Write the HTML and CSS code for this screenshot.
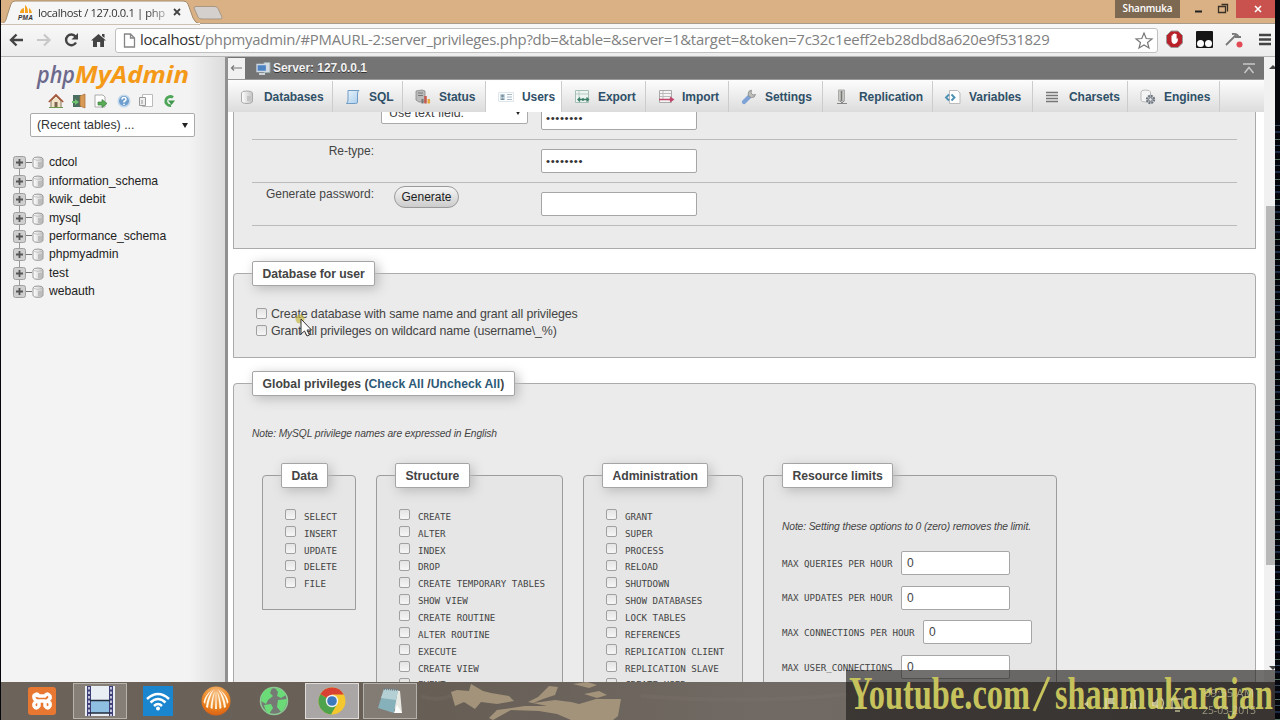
FILE: index.html
```html
<!DOCTYPE html>
<html lang="en">
<head>
    <meta charset="UTF-8">
    <title>localhost / 127.0.0.1 | phpMyAdmin</title>
    <link rel="stylesheet" href="styles.css">
</head>
<body>

<!-- shared icons -->
<svg class="defs" width="0" height="0">
    <defs>
        <linearGradient id="gBlue" x1="0" y1="0" x2="1" y2="1"><stop offset="0" stop-color="#eaf5fd"/><stop offset="1" stop-color="#a9cdea"/></linearGradient>
        <linearGradient id="gGrey" x1="0" y1="0" x2="1" y2="0"><stop offset="0" stop-color="#fff"/><stop offset="1" stop-color="#c4c4c4"/></linearGradient>
        <radialGradient id="gBall" cx=".5" cy=".25" r=".8"><stop offset="0" stop-color="#f7c187"/><stop offset=".6" stop-color="#ea8420"/><stop offset="1" stop-color="#d85a12"/></radialGradient>
    </defs>
    <symbol id="db" viewBox="0 0 12 13">
        <path d="M1 3Q1 1 6 1T11 3V10Q11 12.3 6 12.3T1 10Z" fill="url(#gGrey)" stroke="#999"/>
        <path d="M1.5 3.3Q6 5.6 10.5 3.3" fill="none" stroke="#bbb" stroke-width=".8"/>
        <path d="M6 6h4v5H6z" fill="#bdbdbd"/>
    </symbol>
    <symbol id="plus" viewBox="0 0 13 13">
        <rect x=".5" y=".5" width="12" height="12" rx="2" fill="#cfcfcf" stroke="#a0a0a0"/>
        <path d="M6.5 3v7M3 6.5h7" stroke="#555" stroke-width="1.8"/>
    </symbol>
</svg>

<div class="screen">
    <div class="titlebar">
        <svg class="tab-shape" width="224" height="24" viewBox="0 0 224 24">
            <path d="M0 24C5 23 5 19 7 13L10 4Q11 1 14 1H182Q186 1 187 4L192 18Q194 23 199 24Z" fill="#f6f6f6" stroke="#a48a6a"/>
            <path d="M0 23.5H199" stroke="#f6f6f6"/>
            <path d="M194 6.500H214Q216 6.500 217 8.500L221 17Q221.500 19 219 19H201Q198 19 197 17L193 8Q193 6.500 195 6.500Z" fill="#d3d0cd" stroke="#a99782"/>
        </svg>
        <div class="tab-content">
            <svg width="16" height="16" viewBox="0 0 16 16">
                <path d="M2 9Q2 5 6 4V9ZM7 9V1Q10 3 10 9ZM11 9V4Q14 6 14 9Z" fill="#f4a11c"/>
                <text x="0" y="16" class="pma" textLength="15">PMA</text>
            </svg>
            <span class="tab-title">localhost / 127.0.0.1 | php</span>
            <svg class="tab-close" width="8" height="8" viewBox="0 0 8 8"><path d="M1 1l6 6M7 1L1 7" stroke="#444" stroke-width="1.8"/></svg>
        </div>
        <div class="window-buttons">
            <span class="user">Shanmuka</span>
            <svg width="56" height="18" viewBox="0 0 56 18"><path d="M15 11.500h7" stroke="#222" stroke-width="2"/><path d="M41.500 4.500h6v7M38.500 6.500h7v6h-7z" fill="none" stroke="#3a3026" stroke-width="1.300"/></svg>
            <span class="close"><svg width="8" height="8" viewBox="0 0 8 8"><path d="M1 1l6 6M7 1L1 7" stroke="#fff" stroke-width="1.600"/></svg></span>
        </div>
    </div>

    <div class="toolbar">
        <svg class="nav" width="104" height="20" viewBox="0 0 104 20">
            <path d="M17 10H5M10.500 4.500L5 10L10.500 15.500" fill="none" stroke="#444" stroke-width="2.400"/>
            <path d="M31 10H43M38 4.500L43.500 10L38 15.500" fill="none" stroke="#c8c8c8" stroke-width="2.200"/>
            <path d="M69.500 6.500A5.300 5.300 0 1 0 70 12.500" fill="none" stroke="#444" stroke-width="2.400"/><path d="M72 3v6.500H65.500z" fill="#444"/>
            <path d="M85 10.500L92.500 4L100 10.500H98V17H94.200V12H91V17H87V10.500ZM96 4h2.500v4L96 6z" fill="#444"/>
        </svg>
        <div class="address">
            <svg width="13" height="15" viewBox="0 0 13 15"><path d="M1.500 1H7.500L11.500 5V14H1.500ZM7.500 1V5H11.500" fill="#fff" stroke="#858585" stroke-width="1.300"/></svg>
            <span class="url"><b>localhost</b>/phpmyadmin/#PMAURL-2:server_privileges.php?db=&amp;table=&amp;server=1&amp;target=&amp;token=7c32c1eeff2eb28dbd8a620e9f531829</span>
            <svg class="star" width="18" height="17" viewBox="0 0 18 17"><path d="M9 1L11.200 6.500L17 6.900L12.500 10.500L14 16L9 13L4 16L5.500 10.500L1 6.900L6.800 6.500Z" fill="#fff" stroke="#777" stroke-width="1.200"/></svg>
        </div>
        <svg class="extensions" width="110" height="22" viewBox="0 0 110 22">
            <path d="M7 2h7L18.500 6.500V14L14 18.500H7L2.500 14V6.500Z" fill="#b8202a" stroke="#999"/>
            <path d="M7.500 10V6.500h1.200V5h1.300V4.500h1.300V5h1.300v5l1.200-1v3Q12.500 15 10.500 15Q8 15 7.500 12Z" fill="#fff"/>
            <rect x="32" y="2" width="17" height="17" rx="1" fill="#151515"/><circle cx="36.500" cy="14.500" r="3.500" fill="#fff"/><circle cx="44.500" cy="14.500" r="3.500" fill="#fff"/>
            <path d="M62 16L72 6M68 5Q74 4 75 9M71 8L77 8" fill="none" stroke="#777" stroke-width="1.800"/><circle cx="75.500" cy="15.500" r="3" fill="#e24a55"/>
            <path d="M95 6h12M95 10.500h12M95 15h12" stroke="#444" stroke-width="2.600"/>
        </svg>
    </div>

    <div class="content">
        <div class="sidebar">
            <svg class="logo" width="156" height="30" viewBox="0 0 156 30">
                <text x="2" y="21" class="logo-php" textLength="38" lengthAdjust="spacingAndGlyphs">php</text>
                <text x="40" y="21" class="logo-my" textLength="114" lengthAdjust="spacingAndGlyphs">MyAdmin</text>
            </svg>
            <div class="links">
                <svg width="16" height="16" viewBox="0 0 16 16"><path d="M3 8v6.500h10V8L8 3Z" fill="#f1e3c8" stroke="#8a7663"/><path d="M.8 9L8 2L15.200 9" fill="none" stroke="#a9583c" stroke-width="1.700"/><path d="M6.500 9h3v5.500h-3z" fill="#7d6550"/><path d="M1 14.500h14" stroke="#6a9a4b"/></svg>
                <svg width="16" height="16" viewBox="0 0 16 16"><path d="M2 2h8v12H2z" fill="#4b6d5f"/><path d="M9 3l5-2v14l-5-2z" fill="#d99a56" stroke="#a76b34" stroke-width=".7"/><path d="M1 8h3V6l4 3l-4 3v-2H1z" fill="#6fc36f"/></svg>
                <svg width="16" height="16" viewBox="0 0 16 16"><path d="M2 2h8l2 2v10H2z" fill="#fff" stroke="#aaa"/><path d="M5 9h4V6.500l5 4l-5 4V12H5z" fill="#58ad55" stroke="#3c8042" stroke-width=".7"/></svg>
                <svg width="16" height="16" viewBox="0 0 16 16"><circle cx="8" cy="8" r="5.800" fill="#6f9fce" stroke="#c4d9ec" stroke-width="1.500"/><path d="M6 6.500Q6 4.500 8 4.500T10 6.500Q10 7.500 8 8.500V9.500M8 10.800v1.300" fill="none" stroke="#fff" stroke-width="1.500"/></svg>
                <svg width="16" height="16" viewBox="0 0 16 16"><path d="M4.500 1.500h10v12h-10z" fill="#fff" stroke="#bbb"/><path d="M1.500 4.500h6v8h-6z" fill="#eee" stroke="#999"/><path d="M4 7v4" stroke="#999"/></svg>
                <svg width="16" height="16" viewBox="0 0 16 16"><path d="M12 4.500A4.500 4.500 0 1 0 10 12.500" fill="none" stroke="#4da557" stroke-width="2.800"/><path d="M7 7.500H14L10.500 12z" fill="#3f984d"/></svg>
            </div>
            <div class="recent"><span>(Recent tables) ...</span><i></i></div>
            <ul class="tree">
                <li><svg width="13" height="13"><use href="#plus"/></svg><i></i><svg width="12" height="13"><use href="#db"/></svg><span>cdcol</span></li>
                <li><svg width="13" height="13"><use href="#plus"/></svg><i></i><svg width="12" height="13"><use href="#db"/></svg><span>information_schema</span></li>
                <li><svg width="13" height="13"><use href="#plus"/></svg><i></i><svg width="12" height="13"><use href="#db"/></svg><span>kwik_debit</span></li>
                <li><svg width="13" height="13"><use href="#plus"/></svg><i></i><svg width="12" height="13"><use href="#db"/></svg><span>mysql</span></li>
                <li><svg width="13" height="13"><use href="#plus"/></svg><i></i><svg width="12" height="13"><use href="#db"/></svg><span>performance_schema</span></li>
                <li><svg width="13" height="13"><use href="#plus"/></svg><i></i><svg width="12" height="13"><use href="#db"/></svg><span>phpmyadmin</span></li>
                <li><svg width="13" height="13"><use href="#plus"/></svg><i></i><svg width="12" height="13"><use href="#db"/></svg><span>test</span></li>
                <li><svg width="13" height="13"><use href="#plus"/></svg><i></i><svg width="12" height="13"><use href="#db"/></svg><span>webauth</span></li>
            </ul>
        </div>

        <div class="main">
            <div class="serverbar">
                <span class="back"><svg width="13" height="8" viewBox="0 0 13 8"><path d="M12 4H1.500M4 1.500L1.500 4L4 6.500" fill="none" stroke="#777" stroke-width="1.200"/></svg></span>
                <svg class="server-icon" width="15" height="15" viewBox="0 0 15 15"><path d="M8 1.500h6v10H8z" fill="#d5dbe2" stroke="#9aa"/><path d="M1 3.500h9.500v7H1z" fill="#4c83c3" stroke="#cfd9e4" stroke-width="1.300"/><path d="M3 13h6" stroke="#cdd3da" stroke-width="2"/></svg>
                <span class="server-name">Server: 127.0.0.1</span>
                <svg class="top" width="12" height="11" viewBox="0 0 12 11"><path d="M0 1h12M1.500 10L6 4.500L10.500 10" fill="none" stroke="#c8c8c8" stroke-width="1.500"/></svg>
            </div>
            <div class="tabs">
                <a><svg width="16" height="16" viewBox="0 0 16 16"><path d="M1.500 4Q1.500 2 7 2T12.500 4V12Q12.500 14.500 7 14.500T1.500 12Z" fill="url(#gGrey)" stroke="#aaa"/><path d="M7 7h4v5H7z" fill="#c4c4c4"/></svg>Databases</a>
                <a><svg width="16" height="16" viewBox="0 0 16 16"><path d="M3 1.500H14Q12.500 2 12.500 5V13Q12.500 14.500 10.500 14.500H1.500Q3 13 3 11Z" fill="url(#gBlue)" stroke="#6f9cc4"/></svg>SQL</a>
                <a><svg width="16" height="16" viewBox="0 0 16 16"><path d="M1 2l6-1l3 1v11H4l-3-2z" fill="#bbb" stroke="#888" stroke-width=".8"/><path d="M3 4h5M3 6.500h5" stroke="#777"/><path d="M7.500 10v4.500" stroke="#777" stroke-width="2"/><path d="M10.500 7v7.500" stroke="#c75a4e" stroke-width="2.500"/><path d="M13.800 10v4.500" stroke="#e6a93f" stroke-width="2.500"/></svg>Status</a>
                <a class="active"><svg width="16" height="16" viewBox="0 0 16 16"><path d="M.5 3.500h15v9H.5z" fill="#fbfdff" stroke="#dfe6ea"/><path d="M2 5h5v6H2z" fill="#c5d7e1"/><circle cx="4.500" cy="7" r="1.400" fill="#7d919f"/><path d="M2.500 11q2-4 4 0" fill="#7d919f"/><path d="M9 5.500h5M9 8h5M9 10.500h5" stroke="#abb9c6"/></svg>Users</a>
                <a><svg width="16" height="16" viewBox="0 0 16 16"><path d="M1.500 1.500h13v12h-13z" fill="#eef4f2" stroke="#a5bfb7"/><path d="M2 5h12M5 2v6" stroke="#b6cbc5"/><path d="M4 10.500h10M12.500 8.500l2 2l-2 2M6 8.500l-2 2l2 2M9 9v3" fill="none" stroke="#3d8068" stroke-width="1.400"/></svg>Export</a>
                <a><svg width="16" height="16" viewBox="0 0 16 16"><path d="M1.500 1.500h12v12h-12z" fill="#f7f3f4" stroke="#aaa"/><path d="M2 4.500h11M2 7.500h11M5 2v8" stroke="#bbb"/><path d="M1 10.500h13M12 8.500l3 2l-3 2" fill="none" stroke="#c0476b" stroke-width="1.600"/></svg>Import</a>
                <a><svg width="16" height="16" viewBox="0 0 16 16"><path d="M9 7L3 13" stroke="#7ea2d6" stroke-width="4.200" stroke-linecap="round"/><path d="M14.500 5.500A3.700 3.700 0 1 1 10.500 1.200L10 4l2 2Z" fill="#bfbfba" stroke="#888" stroke-width=".8"/></svg>Settings</a>
                <a><svg width="16" height="16" viewBox="0 0 16 16"><path d="M3.500 1h6v11h-6z" fill="#c9c9c4" stroke="#aaa"/><path d="M6.500 2v10" stroke="#777" stroke-width="1.500"/><path d="M2 14.500h10M5 12l2 2l2-2" fill="none" stroke="#888"/></svg>Replication</a>
                <a><svg width="16" height="16" viewBox="0 0 16 16"><path d="M4.500 1.500h8l2.500 2.500v10.500H4.500z" fill="#fff" stroke="#bbb"/><path d="M4 5.500L1 8.500L4 11.500M6.500 5.500L9.500 8.500L6.500 11.500" fill="none" stroke="#4c91b3" stroke-width="1.900"/></svg>Variables</a>
                <a><svg width="16" height="16" viewBox="0 0 16 16"><path d="M1 3.500h12M1 6.500h12M1 9.500h12M1 12.500h12" stroke="#777" stroke-width="1.700"/></svg>Charsets</a>
                <a><svg width="16" height="16" viewBox="0 0 16 16"><path d="M1 3Q1 1 5.500 1T10.500 3V11Q10 13 5.500 13T1 11Z" fill="#f5f5f5" stroke="#bbb"/><circle cx="10.500" cy="10.500" r="3.600" fill="#ccc" stroke="#6d7680" stroke-width="2.200" stroke-dasharray="1.900 .9"/><circle cx="10.500" cy="10.500" r="1.800" fill="#eee" stroke="#6d7680"/></svg>Engines</a>
            </div>

            <div class="page">
                <div class="login">
                    <div class="item"><label></label><span class="select">Use text field:<i></i></span><span class="input">••••••••</span></div>
                    <div class="item"><label>Re-type:</label><span></span><span class="input">••••••••</span></div>
                    <div class="item"><label>Generate password:</label><span><button>Generate</button></span><span class="input"></span></div>
                </div>

                <fieldset class="box dbuser">
                    <legend>Database for user</legend>
                    <div class="check"><input type="checkbox"><span>Create database with same name and grant all privileges</span></div>
                    <div class="check"><input type="checkbox"><span>Grant all privileges on wildcard name (username\_%)</span></div>
                </fieldset>

                <fieldset class="box global">
                    <legend>Global privileges (<a>Check All</a> /<a>Uncheck All</a>)</legend>
                    <p class="note">Note: MySQL privilege names are expressed in English</p>
                    <div class="groups">
                        <fieldset class="data">
                            <legend>Data</legend>
                            <div class="priv"><input type="checkbox"><code>SELECT</code></div>
                            <div class="priv"><input type="checkbox"><code>INSERT</code></div>
                            <div class="priv"><input type="checkbox"><code>UPDATE</code></div>
                            <div class="priv"><input type="checkbox"><code>DELETE</code></div>
                            <div class="priv"><input type="checkbox"><code>FILE</code></div>
                        </fieldset>
                        <fieldset class="structure">
                            <legend>Structure</legend>
                            <div class="priv"><input type="checkbox"><code>CREATE</code></div>
                            <div class="priv"><input type="checkbox"><code>ALTER</code></div>
                            <div class="priv"><input type="checkbox"><code>INDEX</code></div>
                            <div class="priv"><input type="checkbox"><code>DROP</code></div>
                            <div class="priv"><input type="checkbox"><code>CREATE TEMPORARY TABLES</code></div>
                            <div class="priv"><input type="checkbox"><code>SHOW VIEW</code></div>
                            <div class="priv"><input type="checkbox"><code>CREATE ROUTINE</code></div>
                            <div class="priv"><input type="checkbox"><code>ALTER ROUTINE</code></div>
                            <div class="priv"><input type="checkbox"><code>EXECUTE</code></div>
                            <div class="priv"><input type="checkbox"><code>CREATE VIEW</code></div>
                            <div class="priv"><input type="checkbox"><code>EVENT</code></div>
                        </fieldset>
                        <fieldset class="admin">
                            <legend>Administration</legend>
                            <div class="priv"><input type="checkbox"><code>GRANT</code></div>
                            <div class="priv"><input type="checkbox"><code>SUPER</code></div>
                            <div class="priv"><input type="checkbox"><code>PROCESS</code></div>
                            <div class="priv"><input type="checkbox"><code>RELOAD</code></div>
                            <div class="priv"><input type="checkbox"><code>SHUTDOWN</code></div>
                            <div class="priv"><input type="checkbox"><code>SHOW DATABASES</code></div>
                            <div class="priv"><input type="checkbox"><code>LOCK TABLES</code></div>
                            <div class="priv"><input type="checkbox"><code>REFERENCES</code></div>
                            <div class="priv"><input type="checkbox"><code>REPLICATION CLIENT</code></div>
                            <div class="priv"><input type="checkbox"><code>REPLICATION SLAVE</code></div>
                            <div class="priv"><input type="checkbox"><code>CREATE USER</code></div>
                        </fieldset>
                        <fieldset class="limits">
                            <legend>Resource limits</legend>
                            <p class="note">Note: Setting these options to 0 (zero) removes the limit.</p>
                            <div class="limit"><code>MAX QUERIES PER HOUR</code><span class="input">0</span></div>
                            <div class="limit"><code>MAX UPDATES PER HOUR</code><span class="input">0</span></div>
                            <div class="limit"><code>MAX CONNECTIONS PER HOUR</code><span class="input">0</span></div>
                            <div class="limit"><code>MAX USER_CONNECTIONS</code><span class="input">0</span></div>
                        </fieldset>
                    </div>
                </fieldset>
            </div>
        </div>

        <div class="scrollbar"><i class="up"></i><div class="thumb"></div><i class="down"></i></div>
    </div>

    <div class="taskbar">
        <svg class="camo" width="760" height="38" viewBox="0 0 760 38">
            <path d="M30 10L36 8L48 9L50 2L62 9L70 11L88 14L93 19L76 22L60 20L54 27L43 20L34 24Z" fill="#a3937a"/>
            <path d="M107 20L117 15L128 4L137 5L134 13L122 17L112 21L134 18L150 20L158 22L175 17L200 17L197 34L192 38L150 38L136 32L118 29L90 28L72 38L68 36L76 28L104 24L126 24Z" fill="#a3937a"/>
            <path d="M152 2L166 0L176 3L168 6ZM163 12L178 9L186 13L176 16Z" fill="#a3937a"/>
            <path d="M0 14Q14 20 30 14M220 14Q350 24 460 8" fill="none" stroke="#827a72" stroke-width="4" opacity=".2"/>
        </svg>
        <div class="task"><svg width="30" height="30" viewBox="0 0 30 30"><rect x="1" y="1" width="28" height="28" rx="3" fill="#e87731"/><path d="M11 10Q6 7 7 12Q8 15 11 15Q6 16 7 20Q9 24 12 20V15H18V20Q21 24 23 20Q24 16 20 15Q24 13 23 10Q20 6 18 10H12Q10 6 7 10" fill="none" stroke="#fff" stroke-width="3.400" stroke-linejoin="round"/></svg></div>
        <div class="task open"><svg width="30" height="30" viewBox="0 0 30 30"><rect width="30" height="30" fill="#e9eef5"/><path d="M2 0h4v30H2zM24 0h4v30h-4z" fill="#3f3f78"/><path d="M4 1v29M26 1v29" stroke="#e3e3f2" stroke-width="1.600" stroke-dasharray="2.500 2"/><path d="M6 15h18v12H6z" fill="#8fc0e2"/><path d="M5 14.500h20M5 27h20" stroke="#222b3b" stroke-width="1.600"/></svg></div>
        <div class="task"><svg width="30" height="30" viewBox="0 0 30 30"><rect width="30" height="30" fill="#1a86d0"/><path d="M4 13Q15 3 26 13M7.500 16.500Q15 9.500 22.500 16.500M11 20Q15 16 19 20" fill="none" stroke="#fff" stroke-width="2.500"/><circle cx="15" cy="22.500" r="2" fill="#fff"/></svg></div>
        <div class="task"><svg width="30" height="30" viewBox="0 0 30 30"><circle cx="15" cy="15" r="14.500" fill="url(#gBall)"/><path d="M13 3Q6 10 5 21L7 22Q8 12 13 3ZM14 5Q10 13 9.500 22L11.500 23Q12 12 14 5ZM15 5L14 23H16ZM16 5Q18 12 18.500 23L20.500 22Q20 13 16 5ZM17 3Q22 12 23 22L25 21Q24 10 17 3ZM11 4Q4 9 2.500 16L4 18Q5 10 11 4ZM19 4Q26 9 27.500 16L26 18Q25 10 19 4Z" fill="#fff6e3"/></svg></div>
        <div class="task"><svg width="30" height="30" viewBox="0 0 30 30"><circle cx="15" cy="15" r="13.500" fill="#767a75" stroke="#8fc896" stroke-width="1.500"/><path d="M3 8Q6 2 13 2L11 7L14 10L9 14L7 18L2 15ZM16 2Q24 3 27 9L22 12L18 10L19 6ZM5 19L12 18L14 22L10 28Q6 25 5 19ZM19 14L28 13Q28 21 22 26L18 21Z" fill="#6bdb78"/><path d="M14 14h5M13 17h5" stroke="#777"/></svg></div>
        <div class="task open current"><svg width="28" height="28" viewBox="0 0 28 28"><circle cx="14" cy="14" r="13.500" fill="#f4c72f"/><path d="M14 14L2.300 7.200A13.500 13.500 0 0 1 25.800 7.500H14Z" fill="#d94133"/><path d="M14 14L2.300 7.200A13.500 13.500 0 0 0 13 27.500L19 17Z" fill="#4fa34d"/><circle cx="14" cy="14" r="6.200" fill="#f2f2f2"/><circle cx="14" cy="14" r="4.800" fill="#3e78bd"/></svg></div>
        <div class="task open"><svg width="30" height="30" viewBox="0 0 30 30"><path d="M9 3L25 5L27 27L22 27Z" fill="#e9e9e4"/><path d="M9 3L23 4L19 27L3 22Z" fill="#86b0ba"/><path d="M9 3L23 4L21 14L6 12Z" fill="#b4d0d5"/><path d="M9 3L23 4" stroke="#6d7c82" stroke-width="2" stroke-dasharray="1 1"/><path d="M19 27l3-8l5 8z" fill="#fff"/></svg></div>
    </div>

    <svg class="cursor" width="20" height="24" viewBox="0 0 20 24">
        <circle cx="6" cy="5" r="4.500" fill="#c3b53a" opacity=".65"/>
        <path d="M7 5V20L10.500 17L13 22L15.500 21L13 16H17.500Z" fill="#fff" stroke="#333"/>
    </svg>

    <svg class="watermark" width="429" height="50" viewBox="0 0 429 50">
        <text x="3" y="39" class="mark" textLength="181" lengthAdjust="spacingAndGlyphs">Youtube.com</text>
        <path d="M188 41L203 7" stroke="#c6c25c" stroke-width="3"/>
        <text x="209" y="39" class="mark" textLength="218" lengthAdjust="spacingAndGlyphs">shanmukarajan</text>
        <g class="tray">
            <path d="M238 34l4-3v6z"/>
            <path d="M259 28h2v11h-2zM262 28h7l-2 3l2 3h-7z"/>
            <path d="M280 38h2v-2h-2zM284 38h2v-5h-2zM288 38h2v-8h-2z"/>
            <path d="M306 32h3l3-4v11l-3-3h-3z"/>
            <path d="M315 28q5 5 0 11M326 29h10v9h-10zM329 41h5" class="line"/>
        </g>
        <text x="358" y="27" class="clock" textLength="50" lengthAdjust="spacingAndGlyphs">09:55 AM</text>
        <text x="356" y="44" class="clock" textLength="54" lengthAdjust="spacingAndGlyphs">25-03-2015</text>
    </svg>
</div>

</body>
</html>
```
FILE: styles.css
```css
* {
    box-sizing: border-box;
}
body {
    margin: 0;
    height: 720px;
    overflow: hidden;
    padding-left: 1px;
    background: #05070c;
    font-family: "Liberation Sans", Arial, sans-serif;
    font-size: 13px;
    color: #444;
}
/* strip of desktop right of the window */
body::after {
    content: "";
    position: absolute;
    top: 120px;
    right: 0;
    bottom: 0;
    width: 5px;
    background: repeating-linear-gradient(#05070c 0 5px, #33485c 5px 6px, #05070c 6px 11px, #1c2a44 11px 13px, #05070c 13px 19px, #51705f 19px 20px);
}
svg {
    display: block;
    flex: none;
    overflow: visible;
}
.defs {
    position: absolute;
}
.screen {
    position: relative;
    display: flex;
    flex-direction: column;
    width: 1274px;
    height: 720px;
    overflow: hidden;
}

/* browser window */
.titlebar {
    position: relative;
    display: flex;
    justify-content: space-between;
    height: 24px;
    background: #d9b185;
    border-bottom: 1px solid #a89c8c;
}
.tab-shape {
    position: absolute;
    left: 0;
    top: 0;
}
.tab-content {
    position: relative;
    display: flex;
    align-items: center;
    padding-left: 17px;
    height: 24px;
}
.pma {
    font: italic bold 6.5px "Liberation Sans", sans-serif;
    fill: #333;
}
.tab-title {
    width: 128px;
    margin-left: 4px;
    font: 11.2px "Open Sans", sans-serif;
    letter-spacing: -.36px;
    white-space: nowrap;
    color: #333;
    -webkit-mask-image: linear-gradient(90deg, #000 85%, rgba(0, 0, 0, .35));
}
.tab-close {
    margin-left: 7px;
}
.window-buttons {
    display: flex;
    height: 18px;
}
.user {
    width: 65px;
    background: #7d6852;
    color: #fff;
    font: 600 10px/17px "Open Sans", sans-serif;
    letter-spacing: -.2px;
    text-align: center;
}
.close {
    display: flex;
    align-items: center;
    justify-content: center;
    width: 39px;
    padding-left: 4px;
    background: #c9524f;
}
.toolbar {
    display: flex;
    align-items: center;
    height: 33px;
    padding-left: 5px;
    background: linear-gradient(#f8f8f8, #ececec);
    border-bottom: 1px solid #b5b5b5;
}
.nav {
    margin-right: 5px;
}
.address {
    display: flex;
    align-items: center;
    width: 1043px;
    height: 25px;
    padding: 0 4px 0 7px;
    background: #fff;
    border: 1px solid #c0c0c0;
    border-radius: 3px;
}
.url {
    margin: -2px 0 0 4px;
    font: 14.9px "Open Sans", sans-serif;
    letter-spacing: -.24px;
    white-space: nowrap;
    color: #808080;
}
.url b {
    font-weight: normal;
    letter-spacing: -.3px;
    color: #333;
}
.star {
    margin-left: auto;
}
.extensions {
    margin-left: 6px;
}

/* navigation panel */
.content {
    display: flex;
    height: 625px;
    overflow: hidden;
    background: #fff;
}
.sidebar {
    width: 227px;
    background: linear-gradient(90deg, #f3f3f3 84%, #dcdcdc);
    border-right: 3px solid #909090;
}
.logo {
    margin: 5px 0 0 34px;
}
.logo-php,
.logo-my {
    font: italic 600 24px "Open Sans", sans-serif;
    fill: #6c6a8c;
}
.logo-my {
    font-weight: bold;
    fill: #f49a18;
}
.links {
    display: flex;
    gap: 6.5px;
    margin: 1px 0 4px 47px;
}
.recent {
    display: flex;
    align-items: center;
    justify-content: space-between;
    width: 165px;
    height: 24px;
    margin-left: 29px;
    padding: 0 6px;
    background: #fff;
    border: 1px solid #aaa;
    border-radius: 2px;
    font-size: 12.4px;
    letter-spacing: -.02px;
    color: #333;
}
.recent i,
.select i {
    border: 3px solid transparent;
    border-top: 5px solid #222;
    border-bottom: 0;
}
.tree {
    margin: 16px 0 0 12px;
    padding: 0;
    list-style: none;
    color: #222;
    font-size: 12.2px;
    letter-spacing: -.04px;
    background: linear-gradient(#999, #999) 6px 10px / 1px 130px no-repeat;
}
.tree li {
    display: flex;
    align-items: center;
    height: 18.45px;
}
.tree li svg {
    margin-top: 1px;
}
.tree i {
    width: 6px;
    height: 1px;
    background: #777;
}
.tree span {
    margin-left: 5px;
}

/* server bar and tabs */
.main {
    width: 1036px;
    overflow: hidden;
}
.serverbar {
    display: flex;
    align-items: center;
    height: 23px;
    background: #747474;
    border-bottom: 1px solid #999;
}
.back {
    display: flex;
    align-items: center;
    justify-content: center;
    width: 17px;
    height: 21px;
    background: #f1f1f1;
}
.server-icon {
    margin-left: 11px;
}
.server-name {
    margin-left: 2px;
    font-size: 12px;
    font-weight: bold;
    letter-spacing: -.05px;
    color: #f2f2f2;
    text-shadow: 0 1px 0 #333;
}
.top {
    margin-left: auto;
    margin-right: 9px;
}
.tabs {
    display: grid;
    grid-template-columns: 105px 70px 83px 76px 84px 83px 94px 110px 100px 95px 92px;
    height: 32px;
    padding-top: 1px;
    background: linear-gradient(#fdfdfd, #dcdcdc);
    font-size: 12px;
    font-weight: bold;
    letter-spacing: -.06px;
    color: #2f5068;
}
.tabs a {
    display: flex;
    align-items: center;
    gap: 8px;
    padding-left: 12px;
    white-space: nowrap;
    border-right: 1px solid #ccc;
}
.tabs a.active {
    background: #fff;
}

/* privileges form */
.page {
    height: 570px;
    padding: 0 8px 0 5px;
    overflow: hidden;
}
.login {
    height: 153px;
    margin-top: -16px;
    padding: 0 18px;
    background: #ebebeb;
    border: 1px solid #aaa;
    border-top: 0;
}
.item {
    display: grid;
    grid-template-columns: 122px 167px 156px;
    height: 43px;
    border-bottom: 1px solid #bbb;
}
.item:first-child {
    height: 44px;
    padding-top: 1px;
}
.item label {
    padding-top: 4px;
    text-align: right;
    font-size: 12px;
}
.input {
    display: flex;
    align-items: center;
    background: #fff;
    border: 1px solid #a6a6a6;
    border-radius: 2px;
}
.item .input {
    height: 24px;
    margin-top: 9px;
    padding: 0 4px;
    font-size: 11.5px;
    letter-spacing: .6px;
    color: #333;
}
.select {
    display: flex;
    align-items: center;
    justify-content: space-between;
    width: 147px;
    height: 23px;
    margin: 4px 0 0 7px;
    padding: 0 6px 0 7px;
    background: #fff;
    border: 1px solid #aaa;
    border-radius: 2px;
    font-size: 12.4px;
}
.item button {
    width: 65px;
    height: 22px;
    margin: 3px 0 0 20px;
    padding: 0;
    background: linear-gradient(#f6f6f6, #ccc);
    border: 1px solid #999;
    border-radius: 11px;
    font: 12px "Liberation Sans", sans-serif;
    color: #222;
}
fieldset {
    min-width: 0;
    margin: 0;
    padding: 0 18px;
    border: 1px solid #aaa;
    border-radius: 4px 4px 0 0;
}
.box {
    margin-top: 12px;
    background: #ebebeb;
}
legend {
    height: 25px;
    padding: 0 9.5px;
    background: #fff;
    border: 1px solid #a5a5a5;
    border-radius: 2px;
    box-shadow: 3px 3px 12px #bbb;
    font-size: 12.2px;
    font-weight: bold;
    line-height: 24px;
    letter-spacing: -.04px;
    white-space: nowrap;
}
legend a {
    color: #2c5a78;
}
.dbuser {
    height: 97px;
}
.check {
    display: flex;
    align-items: center;
    height: 17px;
    margin-left: 4px;
    white-space: nowrap;
    font-size: 12.4px;
    letter-spacing: -.11px;
}
legend + .check {
    margin-top: 19px;
}
input[type="checkbox"] {
    appearance: none;
    flex: none;
    width: 11px;
    height: 11px;
    margin: 0;
    background: linear-gradient(#e4e4e4, #f6f6f6);
    border: 1px solid #a0a0a0;
    border-radius: 2px;
}
.check span {
    margin-left: 4px;
}
.global {
    height: 400px;
    margin-top: 13px;
}
.global > legend {
    letter-spacing: .02px;
}
.note {
    margin: 0;
    font-size: 10.3px;
    letter-spacing: -.14px;
    font-style: italic;
    line-height: 14px;
    white-space: nowrap;
}
.global > .note {
    margin-top: 31px;
}
.groups {
    display: flex;
    align-items: flex-start;
    gap: 20px;
    margin: 22px 0 0 10px;
}
.groups fieldset {
    background: #e6e6e6;
    border-color: #9c9c9c;
}
.data {
    width: 94px;
    height: 147px;
}
.structure {
    width: 187px;
    height: 300px;
}
.admin {
    width: 160px;
    height: 300px;
}
.limits {
    width: 294px;
    height: 300px;
}
.priv {
    display: flex;
    align-items: center;
    height: 16.85px;
    margin-left: 4px;
}
.priv input {
    margin-bottom: 3px;
}
legend + .priv {
    margin-top: 20px;
}
code {
    font: 9.18px "DejaVu Sans Mono", monospace;
    white-space: nowrap;
    color: #444;
}
.priv code {
    margin-left: 8px;
}
.limits .note {
    margin-top: 32px;
    margin-bottom: 17px;
}
.limit {
    display: flex;
    align-items: center;
    height: 24px;
    margin-bottom: 10.7px;
}
.limit .input {
    width: 109px;
    height: 24px;
    margin-left: 8.5px;
    padding: 0 5px;
    font-size: 12px;
}

.scrollbar {
    width: 11px;
    padding: 8px 0 0 2px;
    background: #f1f1f1;
}
.scrollbar i {
    display: block;
    width: 0;
    border: 4px solid transparent;
    border-top: 0;
    border-bottom: 4px solid #444;
    margin-left: 3px;
}
.thumb {
    height: 359px;
    margin-top: 137px;
    background: #b9b9b9;
}
.scrollbar .down {
    border-top: 4px solid #444;
    border-bottom: 0;
    margin-top: 101px;
}

/* desktop */
.taskbar {
    position: relative;
    display: flex;
    align-items: center;
    height: 38px;
    padding-left: 14px;
    gap: 4px;
    background: linear-gradient(90deg, #6c645b, #675f56 35%, #716a64 60%, #696360);
}
.camo {
    position: absolute;
    left: 420px;
    top: 0;
}
.task {
    display: flex;
    align-items: center;
    justify-content: center;
    width: 54px;
    height: 36px;
}
.task.open {
    background: rgba(255, 255, 255, .18);
    border: 1px solid #b5b1ac;
}
.task.current {
    background: #aaa6a5;
    border-color: #dedcda;
}
.cursor {
    position: absolute;
    left: 293px;
    top: 314px;
}
.watermark {
    position: absolute;
    left: 845px;
    top: 670px;
    background: rgba(28, 24, 22, .62);
}
.mark {
    font: bold 47px "Liberation Serif", serif;
    fill: #c6c25c;
}
.tray {
    fill: #dcd9a8;
    opacity: .8;
}
.tray .line {
    fill: none;
    stroke: #dcd9a8;
    stroke-width: 1.5;
}
.clock {
    font: 11px "Open Sans", sans-serif;
    fill: #d6d3b0;
    opacity: .6;
}
```
